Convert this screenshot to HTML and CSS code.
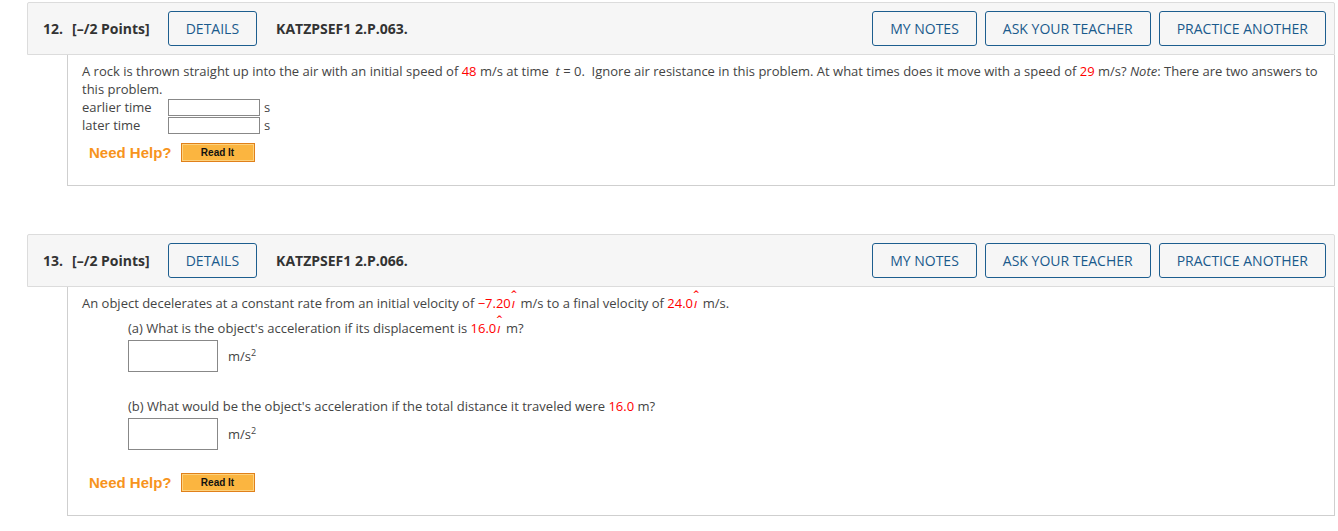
FILE: index.html
```
<!DOCTYPE html>
<html lang="en">
<head>
<meta charset="UTF-8" />
<title>Assignment</title>
<link rel="stylesheet" href="styles.css">
</head>
<body>
<div class="question">
  <div class="qhead">
    <span class="qnum">12.</span>
    <span class="qpts">[–/2 Points]</span>
    <button class="btn">DETAILS</button>
    <span class="qcode">KATZPSEF1 2.P.063.</span>
    <div class="actions">
      <button class="btn">MY NOTES</button>
      <button class="btn">ASK YOUR TEACHER</button>
      <button class="btn">PRACTICE ANOTHER</button>
    </div>
  </div>
  <div class="qbody">
    <p class="text">A rock is thrown straight up into the air with an initial speed of <span class="red">48</span> m/s at time &nbsp;<i>t</i> = 0. &nbsp;Ignore air resistance in this problem. At what times does it move with a speed of <span class="red">29</span> m/s? <i>Note</i>: There are two answers to this problem.</p>
    <div class="row"><span class="lbl">earlier time</span><input class="small" type="text"><span class="unit">s</span></div>
    <div class="row"><span class="lbl">later time</span><input class="small" type="text"><span class="unit">s</span></div>
    <div class="help"><span class="need">Need Help?</span><button class="readit">Read It</button></div>
  </div>
</div>

<div class="question">
  <div class="qhead">
    <span class="qnum">13.</span>
    <span class="qpts">[–/2 Points]</span>
    <button class="btn">DETAILS</button>
    <span class="qcode">KATZPSEF1 2.P.066.</span>
    <div class="actions">
      <button class="btn">MY NOTES</button>
      <button class="btn">ASK YOUR TEACHER</button>
      <button class="btn">PRACTICE ANOTHER</button>
    </div>
  </div>
  <div class="qbody">
    <p class="text">An object decelerates at a constant rate from an initial velocity of <span class="red">−7.20<span class="hat">ı</span></span> m/s to a final velocity of <span class="red">24.0<span class="hat">ı</span></span> m/s.</p>
    <div class="part">
      <p class="text">(a) What is the object's acceleration if its displacement is <span class="red">16.0<span class="hat">ı</span></span> m?</p>
      <div class="answer"><input class="big" type="text"><span class="unit">m/s<sup>2</sup></span></div>
      <p class="text part-b">(b) What would be the object's acceleration if the total distance it traveled were <span class="red">16.0</span> m?</p>
      <div class="answer"><input class="big" type="text"><span class="unit">m/s<sup>2</sup></span></div>
    </div>
    <div class="help help2"><span class="need">Need Help?</span><button class="readit">Read It</button></div>
  </div>
</div>
</body>
</html>
```

FILE: styles.css
```
body { margin: 0; padding: 2px 3px 0 27px; background: white; font-family: "Open Sans", Arial, sans-serif; color: #333; }

.question + .question { margin-top: 48px; }

.qhead { display: flex; align-items: center; height: 51px; padding: 0 8px 0 15px; background: #f6f6f6; border: 1px solid #dcdcdc; border-radius: 2px 2px 0 0; font-size: 14px; font-weight: bold; color: #333; }

.qnum { margin-right: 9px; }

.btn { height: 35px; padding: 0 17px; background: #f6f6f6; border: 1px solid #1d5e8f; border-radius: 3px; color: #1a5a8c; font-family: "Open Sans", Arial, sans-serif; font-size: 14px; }

.qpts { margin-right: 18px; }

.qcode { margin-left: 19px; }

.actions { margin-left: auto; display: flex; gap: 8px; }

.qbody { margin-left: 40px; padding: 7px 14px 23px; border: 1px solid #cfcfcf; border-top: none; font-size: 13px; color: #444; }

.text { margin: 0; line-height: 18px; }

.red { color: #f00; }

.hat { position: relative; font-style: italic; margin: 0 2px 0 1px; }

.hat::before { content: "ˆ"; position: absolute; left: -1px; top: -6px; font-style: normal; font-size: 16px; }

.row { display: flex; align-items: center; height: 18px; }

.lbl { width: 86px; }

.small { width: 86px; height: 13px; margin: 0; padding: 1px 2px; border: 1px solid #888; }

.unit { margin-left: 4px; }

.help { display: flex; align-items: center; margin: 9px 0 0 7px; }

.need { font-family: "Liberation Sans", Arial, sans-serif; font-size: 15px; font-weight: bold; color: #f7941d; margin-right: 9px; }

.readit { width: 74px; height: 19px; padding: 0; background: #fbb540; border: 1px solid #e0801a; box-shadow: inset 0 0 0 1px #fdd27e; font-family: "Liberation Sans", Arial, sans-serif; font-size: 10px; font-weight: bold; color: #111; }

.part { margin: 7px 0 0 46px; }

.answer { display: flex; align-items: center; margin-top: 2px; height: 34px; }

.big { width: 84px; height: 28px; margin: 0; padding: 1px 2px; border: 1px solid #888; }

.answer .unit { margin-left: 10px; }

.unit sup { font-size: 9px; vertical-align: 5px; line-height: 0; }

.part-b { margin-top: 24px; }

.help2 { margin-top: 22px; }
```
